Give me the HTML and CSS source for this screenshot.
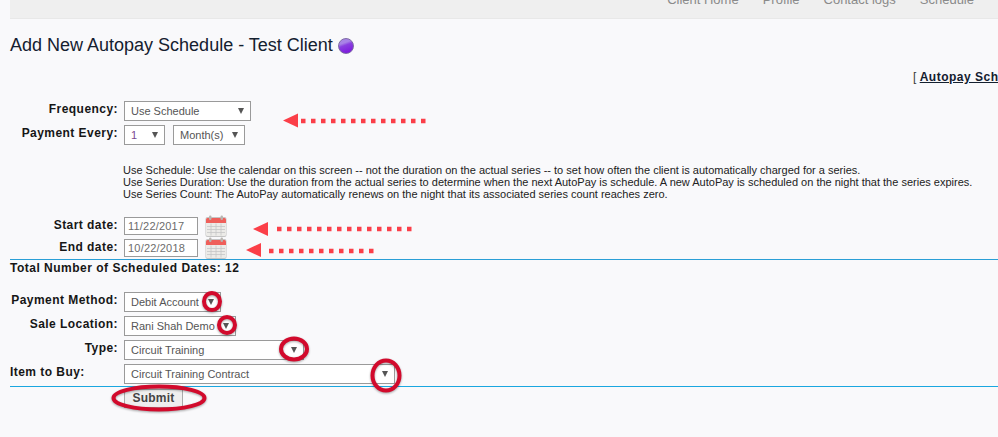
FILE: index.html
```html
<!DOCTYPE html>
<html lang="en">
<head>
<meta charset="utf-8">
<title>Add New Autopay Schedule</title>
<link rel="stylesheet" href="styles.css">
</head>
<body>
<div class="page">
  <header class="topbar">
    <nav class="nav">
      <a>Client Home</a><a>Profile</a><a>Contact logs</a><a>Schedule</a>
    </nav>
  </header>
  <main class="content">
    <h1 class="title">Add New Autopay Schedule - Test Client<span class="orb"></span></h1>
    <div class="crumb">[ <a>Autopay Schedules</a> ]</div>

    <div class="row first">
      <label class="lab">Frequency:</label>
      <span class="sel w127">Use Schedule<i></i></span>
    </div>
    <div class="row">
      <label class="lab">Payment Every:</label>
      <span class="sel w41 purple">1<i></i></span>
      <span class="sel w72 gap">Month(s)<i></i></span>
    </div>

    <div class="help">
      <div>Use Schedule: Use the calendar on this screen -- not the duration on the actual series -- to set how often the client is automatically charged for a series.</div>
      <div>Use Series Duration: Use the duration from the actual series to determine when the next AutoPay is schedule. A new AutoPay is scheduled on the night that the series expires.</div>
      <div>Use Series Count: The AutoPay automatically renews on the night that its associated series count reaches zero.</div>
    </div>

    <div class="row date">
      <label class="lab">Start date:</label>
      <span class="inp">11/22/2017</span>
      <svg class="cal" viewBox="0 0 24 24"><use href="#calendar"/></svg>
    </div>
    <div class="row date second">
      <label class="lab">End date:</label>
      <span class="inp">10/22/2018</span>
      <svg class="cal" viewBox="0 0 24 24"><use href="#calendar"/></svg>
    </div>
    <div class="total">Total Number of Scheduled Dates: 12</div>

    <div class="row method">
      <label class="lab">Payment Method:</label>
      <span class="sel w97">Debit Account<i></i></span>
    </div>
    <div class="row">
      <label class="lab">Sale Location:</label>
      <span class="sel w112">Rani Shah Demo<i></i></span>
    </div>
    <div class="row">
      <label class="lab">Type:</label>
      <span class="sel w180">Circuit Training<i></i></span>
    </div>
    <div class="row last">
      <label class="lab left">Item to Buy:</label>
      <span class="sel w271">Circuit Training Contract<i></i></span>
    </div>
    <div class="actions"><button class="submit" type="button">Submit</button></div>
  </main>

  <svg class="marks" width="998" height="437" viewBox="0 0 998 437">
    <defs>
      <g id="calendar">
        <rect x="1.500" y="3" width="21" height="20" rx="2" fill="#c4c4c4"/>
        <rect x="2" y="4" width="20" height="18" rx="1.500" fill="#ecebe8"/>
        <path d="M2 9V5.500A1.500 1.500 0 0 1 3.500 4h17A1.500 1.500 0 0 1 22 5.500V9Z" fill="#ef5f5a"/>
        <path d="M3 12.500H21M3 15.500H21M3 18.500H21M7 9.500V21.500M12 9.500V21.500M17 9.500V21.500" stroke="#c6c6c6" stroke-width=".8" fill="none"/>
        <rect x="5" y="1.500" width="2.500" height="4.500" rx="1.200" fill="#b9b5b0"/>
        <rect x="16.500" y="1.500" width="2.500" height="4.500" rx="1.200" fill="#b9b5b0"/>
      </g>
    </defs>
    <g fill="#fb3f48">
      <path d="M283 120.500 298 113.500V127.500Z"/>
      <path d="M253 229 268 222V236Z"/>
      <path d="M246 250 261 243V257Z"/>
    </g>
    <g fill="none" stroke="#fb3f48" stroke-width="4.500" stroke-dasharray="4.500 5.500">
      <path d="M301 121H427"/>
      <path d="M277 229H412"/>
      <path d="M269 251H374"/>
    </g>
    <g class="rings" fill="none" stroke="#d20a2c" stroke-width="4">
      <ellipse cx="212" cy="301.500" rx="8" ry="8.500"/>
      <ellipse cx="227" cy="325" rx="8" ry="8"/>
      <ellipse cx="294" cy="349" rx="13" ry="10.500"/>
      <ellipse cx="386" cy="375.500" rx="13.500" ry="15"/>
      <ellipse cx="159" cy="398" rx="45.500" ry="11.500"/>
    </g>
  </svg>
</div>
</body>
</html>
```

FILE: styles.css
```css
* { box-sizing: border-box; }
html, body { margin: 0; padding: 0; }
body {
  background: #f9f9fb;
  font-family: "Liberation Sans", Arial, sans-serif;
  color: #1a1a1a;
  width: 998px;
  height: 437px;
  overflow: hidden;
}
.page { position: relative; width: 998px; height: 437px; overflow: hidden; }

.topbar {
  margin-left: 10px;
  height: 19px;
  background: #efefef;
  border-bottom: 1px solid #e8e8e8;
  overflow: hidden;
}
.nav {
  display: flex;
  justify-content: flex-end;
  gap: 24px;
  padding-right: 24px;
  margin-top: -8px;
  font-size: 13px;
  line-height: 15px;
  color: #8a8a8a;
}

.content { padding-left: 10px; }

.title {
  margin: 16px 0 0;
  font-size: 18px;
  font-weight: 400;
  line-height: 21px;
  color: #14202f;
  display: flex;
  align-items: center;
  gap: 5px;
  white-space: pre;
}
.orb {
  width: 16px;
  height: 16px;
  border-radius: 50%;
  background: linear-gradient(160deg, #a883e6 0 30%, #8a3fe0 45%, #7a10dc 100%);
  border: 1px solid #7d6aa5;
}

.crumb {
  margin-top: 14px;
  white-space: nowrap;
  padding-left: 903px;
  font-size: 12px;
  font-weight: 400;
  line-height: 14px;
  color: #3a3a3a;
  width: 1200px;
}
.crumb a { font-weight: 700; text-decoration: underline; color: #14202f; letter-spacing: .5px; }

.row { display: flex; align-items: flex-start; height: 20px; margin-top: 4px; }
.row.first { margin-top: 17px; }
.lab {
  width: 108px;
  margin-right: 6px;
  padding-top: 1px;
  text-align: right;
  font-size: 12px;
  font-weight: 700;
  line-height: 14px;
  letter-spacing: .45px;
  white-space: nowrap;
  color: #161616;
  flex: none;
}
.lab.left { text-align: left; }

.sel {
  position: relative;
  display: block;
  height: 20px;
  border: 1px solid #9a9a9a;
  background: #fff;
  padding-left: 6px;
  font-size: 11px;
  line-height: 18px;
  color: #555;
  white-space: nowrap;
  flex: none;
}
.sel i {
  position: absolute;
  right: 6px;
  top: 6px;
  width: 0;
  height: 0;
  border-left: 3px solid transparent;
  border-right: 3px solid transparent;
  border-top: 6px solid #555;
}
.purple { color: #7a4a90; }
.gap { margin-left: 8px; }
.w127 { width: 127px; }
.w41 { width: 41px; }
.w72 { width: 72px; }
.w97 { width: 97px; }
.w112 { width: 112px; }
.w180 { width: 180px; }
.w271 { width: 271px; }

.help {
  margin: 19px 0 0 113px;
  font-size: 11px;
  line-height: 12px;
  color: #222;
  white-space: nowrap;
}

.row.date { margin-top: 17px; height: 22px; }
.row.date.second { margin-top: 0; height: 20px; }
.inp {
  display: block;
  width: 74px;
  height: 18px;
  border: 1px solid #9a9a9a;
  background: #fff;
  padding-left: 3px;
  font-size: 11px;
  line-height: 16px;
  letter-spacing: .2px;
  color: #6c6c6c;
  flex: none;
}
.cal { width: 24px; height: 24px; margin: -3px 0 0 6px; flex: none; overflow: visible; }

.total {
  margin-top: 0;
  padding-top: 1px;
  border-top: 1px solid #2a9fd6;
  margin-right: -10px;
  font-size: 12px;
  font-weight: 700;
  line-height: 15px;
  letter-spacing: .5px;
  color: #161616;
  height: 33px;
}
.row.method { margin-top: 0; }
.row.last { margin-bottom: 2px; }

.actions { border-top: 1px solid #1aa7e0; padding: 2px 0 0 114px; margin-right: -10px; }
.submit {
  display: block;
  width: 59px;
  height: 19px;
  padding: 0;
  border: 1px solid #aaa;
  background: #efefef;
  font: 700 12px/17px "Liberation Sans", Arial, sans-serif;
  letter-spacing: .2px;
  color: #444;
}

.marks { position: absolute; left: 0; top: 0; pointer-events: none; }
.rings { filter: drop-shadow(0 1px 1px rgba(0, 0, 0, .35)); }
```
